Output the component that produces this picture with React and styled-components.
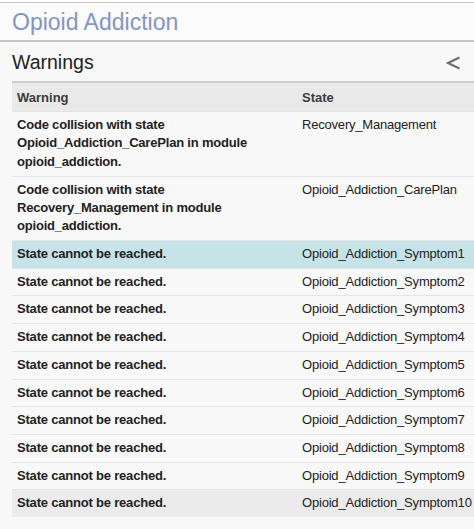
import React from "react";
import styled, { createGlobalStyle } from "styled-components";

const GlobalStyle = createGlobalStyle`
  html, body {
    margin: 0;
    padding: 0;
    background: #ffffff;
    font-family: "Liberation Sans", Arial, sans-serif;
  }
`;

const Page = styled.div`
  padding-top: 2px;
  width: 474px;
  height: 529px;
  overflow: hidden;
  box-sizing: border-box;
`;

const TitleBar = styled.div`
  border-top: 1px solid #c9c9c9;
  border-bottom: 2px solid #c4c4c4;
  background: #fbfbfb;
  height: 37px;
  padding-left: 12px;
  display: flex;
  align-items: center;
`;

const Title = styled.h1`
  margin: 0;
  font-size: 23px;
  font-weight: normal;
  color: #7f96c9;
  position: relative;
  top: 1px;
`;

const Panel = styled.section`
  background: #f8f8f8;
  padding-left: 12px;
  height: 100%;
`;

const PanelHeader = styled.div`
  display: flex;
  align-items: center;
  justify-content: space-between;
  height: 39px;
  padding: 2px 13px 0 0;
  box-sizing: border-box;
`;

const Heading = styled.h2`
  margin: 0;
  font-size: 19.5px;
  font-weight: normal;
  color: #222;
`;

const Collapse = styled.button`
  border: 0;
  background: none;
  padding: 0;
  display: flex;
  cursor: pointer;
`;

const Table = styled.table`
  width: 470px;
  table-layout: fixed;
  border-collapse: collapse;
  font-size: 13px;
  color: #222;
`;

const HeadCell = styled.th`
  text-align: left;
  font-weight: bold;
  color: #3c3c3c;
  background: #e9e9e9;
  border-top: 2px solid #cdcdcd;
  padding: 7px 5px 5px;
  line-height: 16px;
  width: ${(p) => p.$width || "auto"};
`;

const Row = styled.tr`
  background: ${(p) =>
    p.$tone === "info" ? "#c6e4e8" : p.$tone === "hover" ? "#ebebeb" : "transparent"};
`;

const Cell = styled.td`
  vertical-align: top;
  border-top: 1px solid #e4e4e4;
  padding: 4px 5px 4.3px;
  line-height: 18.4px;
  white-space: nowrap;
  letter-spacing: -0.2px;
  font-weight: ${(p) => (p.$bold ? "bold" : "normal")};
`;

const rows = [
  {
    warning: (
      <>
        Code collision with state
        <br />
        Opioid_Addiction_CarePlan in module
        <br />
        opioid_addiction.
      </>
    ),
    state: "Recovery_Management",
  },
  {
    warning: (
      <>
        Code collision with state
        <br />
        Recovery_Management in module
        <br />
        opioid_addiction.
      </>
    ),
    state: "Opioid_Addiction_CarePlan",
  },
  ...Array.from({ length: 10 }, (_, i) => ({
    warning: "State cannot be reached.",
    state: `Opioid_Addiction_Symptom${i + 1}`,
    tone: i === 0 ? "info" : i === 9 ? "hover" : undefined,
  })),
];

export default function App() {
  return (
    <Page>
      <GlobalStyle />
      <TitleBar>
        <Title>Opioid Addiction</Title>
      </TitleBar>
      <Panel>
        <PanelHeader>
          <Heading>Warnings</Heading>
          <Collapse aria-label="collapse">
            <svg width="15" height="14" viewBox="0 0 15 14">
              <polyline
                points="13.5,1.5 2,7 13.5,12.5"
                fill="none"
                stroke="#6f6f6f"
                strokeWidth="2.2"
              />
            </svg>
          </Collapse>
        </PanelHeader>
        <Table>
          <thead>
            <tr>
              <HeadCell $width="275px">Warning</HeadCell>
              <HeadCell>State</HeadCell>
            </tr>
          </thead>
          <tbody>
            {rows.map((r, i) => (
              <Row key={i} $tone={r.tone}>
                <Cell $bold>{r.warning}</Cell>
                <Cell>{r.state}</Cell>
              </Row>
            ))}
          </tbody>
        </Table>
      </Panel>
    </Page>
  );
}
